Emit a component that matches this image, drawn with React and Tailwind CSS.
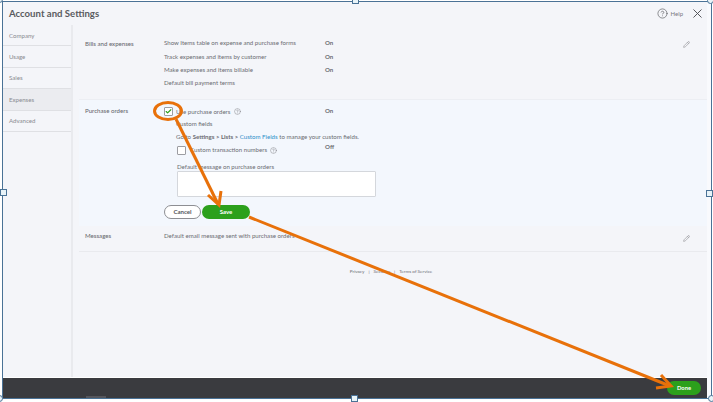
import React from "react";
import { Check, CircleHelp, Pencil, X } from "lucide-react";

const tabs = ["Company", "Usage", "Sales", "Expenses", "Advanced"];

const billRows = [
  ["Show Items table on expense and purchase forms", "On"],
  ["Track expenses and items by customer", "On"],
  ["Make expenses and items billable", "On"],
  ["Default bill payment terms", ""],
];

function Handle({ className }) {
  return <div className={"absolute w-[7px] h-[7px] bg-[#e8f3f8] border border-[#4a7296] " + className} />;
}

export default function App() {
  return (
    <div className="relative w-[713px] h-[402px] bg-white font-['Lato',sans-serif] text-[6.1px] text-[#6b6c72] overflow-hidden whitespace-nowrap">
      {/* screenshot frame */}
      <div className="mx-[2px] mt-[1px] w-[710px] h-[398px] border border-[#4a7296] pr-[4px] bg-[#f9fafd]">
        <div className="h-full flex flex-col bg-[#f4f5f9]">
          <div className="h-[23px] flex items-center justify-between pl-[6px] pr-[2px] shrink-0">
            <div className="text-[9.6px] font-bold text-[#5a5b60] pt-[2px]">Account and Settings</div>
            <div className="flex items-center">
              <CircleHelp size={11} strokeWidth={1.4} className="text-[#55565b]" />
              <span className="ml-[3px] text-[6px] text-[#77787d]">Help</span>
              <X size={15} strokeWidth={1.5} className="ml-[7px] text-[#4c4d52]" />
            </div>
          </div>

          <div className="flex-1 flex min-h-0">
            <div className="w-[70px] shrink-0 border-r-2 border-[#e9eaee] flex flex-col">
              {tabs.map((t) => (
                <div
                  key={t}
                  className={
                    "h-[21.4px] shrink-0 flex items-center pl-[6px] border-b border-[#dfe0e4] text-[#8a8b90] " +
                    (t === "Expenses" ? "bg-[#ebecf0]" : "")
                  }
                >
                  {t}
                </div>
              ))}
            </div>

            <div className="flex-1 flex flex-col pl-[6px]">
              {/* bills and expenses */}
              <div className="h-[74px] shrink-0 flex pl-[6px] pt-[14px] relative">
                <div className="w-[79px] font-medium">Bills and expenses</div>
                <div className="flex flex-col gap-[6.3px]">
                  {billRows.map(([label, val]) => (
                    <div key={label} className="flex h-[7.2px] items-center">
                      <div className="w-[161px]">{label}</div>
                      <div className="font-bold">{val}</div>
                    </div>
                  ))}
                </div>
                <Pencil size={7} className="absolute right-[17px] top-[16px] text-[#8d8e93]" />
              </div>

              {/* purchase orders */}
              <div className="h-[127px] shrink-0 bg-[#f3f7fd] border-t border-[#eceef3] flex pl-[6px] pt-[8px]">
                <div className="w-[79px] font-medium -mt-[2px]">Purchase orders</div>
                <div className="flex flex-col">
                  <div className="flex h-[7px] items-center">
                    <div className="w-[9px] h-[9px] border border-[#9c9da2] bg-white rounded-[1px] flex items-center justify-center">
                      <Check size={7} strokeWidth={4} className="text-[#2ca01c]" />
                    </div>
                    <span className="ml-[3px] w-[58px]">Use purchase orders</span>
                    <CircleHelp size={7} strokeWidth={1.5} className="text-[#77787d]" />
                    <span className="ml-[84px] -mt-[1px] font-bold">On</span>
                  </div>
                  <div className="ml-[12px] mt-[5px] h-[7px] flex items-center">Custom fields</div>
                  <div className="ml-[12px] mt-[6px] h-[7px] flex items-center">
                    Go to&nbsp;<b>Settings &gt; Lists &gt;</b>&nbsp;<span className="text-[#2e8fc9]">Custom Fields</span>&nbsp;to manage your custom fields.
                  </div>
                  <div className="ml-[13px] mt-[6px] h-[8px] flex items-center">
                    <div className="w-[9px] h-[9px] border border-[#9c9da2] bg-white rounded-[1px]" />
                    <span className="ml-[3px] w-[81px] pl-[1px]">Custom transaction numbers</span>
                    <CircleHelp size={7} strokeWidth={1.5} className="text-[#77787d]" />
                    <span className="ml-[48px] -mt-[7px] font-bold">Off</span>
                  </div>
                  <div className="ml-[13px] mt-[9px] h-[7px] flex items-center">Default message on purchase orders</div>
                  <div className="ml-[13px] mt-[1px] w-[199px] h-[26px] bg-white border border-[#d4d7dc] rounded-[1px]" />
                  <div className="mt-[8px] flex items-center">
                    <div className="w-[37px] h-[14px] rounded-full border border-[#8d8e93] bg-white flex items-center justify-center font-bold text-[#55565b]">
                      Cancel
                    </div>
                    <div className="ml-[1px] w-[48px] h-[14px] rounded-full bg-[#2ca01c] flex items-center justify-center font-bold text-white">
                      Save
                    </div>
                  </div>
                </div>
              </div>

              {/* messages */}
              <div className="h-[26px] shrink-0 flex items-center pl-[6px] pb-[6px] border-b border-[#e9eaee] relative">
                <div className="w-[79px] font-medium">Messages</div>
                <div>Default email message sent with purchase orders</div>
                <Pencil size={7} className="absolute right-[17px] top-[9px] text-[#8d8e93]" />
              </div>

              <div className="mt-[16px] flex justify-center pr-[4px] gap-[4px] text-[4.6px]">
                <span>Privacy</span>
                <span>|</span>
                <span>Security</span>
                <span>|</span>
                <span>Terms of Service</span>
              </div>
            </div>
          </div>

          {/* dark footer */}
          <div className="h-[20px] shrink-0 bg-[#3a3b3f] border-t border-white box-content flex items-center justify-end pr-[6px]">
            <div className="w-[34px] h-[14px] rounded-full bg-[#2ca01c] flex items-center justify-center font-bold text-white text-[5.8px]">
              Done
            </div>
          </div>
        </div>
      </div>

      {/* scrollbar stub at the bottom of the dark bar */}
      <div className="absolute left-[86px] top-[396px] w-[20px] h-[2px] bg-[#55565c]" />

      {/* selection handles of the pasted picture */}
      <Handle className="left-[352px] -top-[3px]" />
      <Handle className="left-0 top-[189px]" />
      <Handle className="left-[706px] top-[190px]" />
      <Handle className="left-[351px] top-[395px]" />
      <Handle className="-left-[4px] -top-[4px] rounded-full" />
      <Handle className="left-[707px] -top-[3px] rounded-full" />
      <Handle className="-left-[4px] top-[395px] rounded-full" />
      <Handle className="left-[708px] top-[395px] rounded-full" />

      {/* orange annotations */}
      <svg className="absolute inset-0" width="713" height="402" fill="none" stroke="#e8710a" strokeWidth="3">
        <ellipse cx="168" cy="111" rx="13.5" ry="8.5" />
        <path d="M176 119 L218 204" />
        <path d="M208 195 L219 205 L221 191" />
        <path d="M249 217 L670 386" />
        <path d="M656 388 L671 386 L661 375" />
      </svg>
    </div>
  );
}
